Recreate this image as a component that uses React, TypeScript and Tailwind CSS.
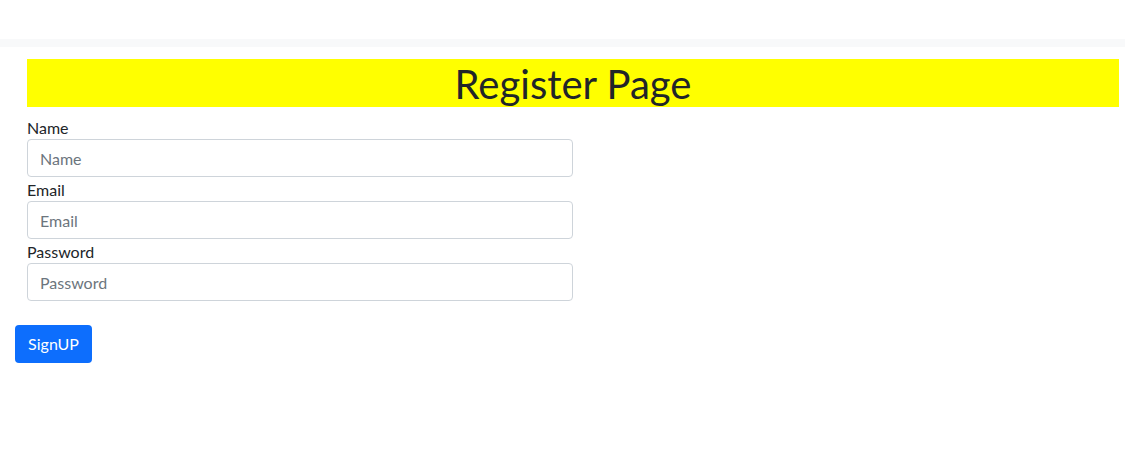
export default function App() {
  return (
    <div className="min-h-[450px] bg-white text-[#212529] font-['Segoe_UI','Lato',sans-serif]">
      <div className="h-[39px]" />
      {/* empty light navbar */}
      <div className="h-2 bg-[#f8f9fa]" />

      <div className="pt-3">
        <h1 className="ml-[27px] mr-[6px] mb-2 h-12 bg-[#ffff00] text-center text-[40px] leading-[50px] font-normal">
          Register Page
        </h1>

        <form className="flex flex-col" onSubmit={(e) => e.preventDefault()}>
          <div className="ml-[27px] w-[546px]">
            <label className="block h-6 pt-px text-base leading-6">Name</label>
            <input
              type="text"
              placeholder="Name"
              className="block h-[38px] w-full rounded border border-[#ced4da] px-3 text-base text-[#212529] placeholder:text-[#6c757d] outline-none"
            />
          </div>
          <div className="ml-[27px] w-[546px]">
            <label className="block h-6 pt-px text-base leading-6">Email</label>
            <input
              type="email"
              placeholder="Email"
              className="block h-[38px] w-full rounded border border-[#ced4da] px-3 text-base text-[#212529] placeholder:text-[#6c757d] outline-none"
            />
          </div>
          <div className="ml-[27px] w-[546px]">
            <label className="block h-6 pt-px text-base leading-6">Password</label>
            <input
              type="password"
              placeholder="Password"
              className="block h-[38px] w-full rounded border border-[#ced4da] px-3 text-base text-[#212529] placeholder:text-[#6c757d] outline-none"
            />
          </div>

          <div className="mt-6 ml-[15px]">
            <button
              type="submit"
              className="h-[38px] w-[77px] rounded bg-[#0d6efd] text-base text-white"
            >
              SignUP
            </button>
          </div>
        </form>
      </div>
    </div>
  );
}
